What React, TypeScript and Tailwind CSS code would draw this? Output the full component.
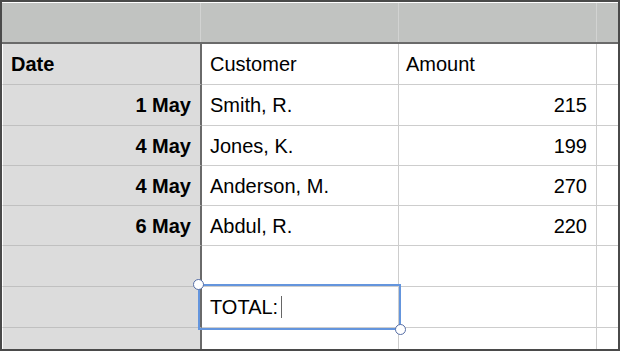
import React from "react";

type Row = { d: string; c: string; a: string; head?: boolean; h: string; cursor?: boolean };

const rows: Row[] = [
  { d: "Date", c: "Customer", a: "Amount", head: true, h: "h-[41px]" },
  { d: "1 May", c: "Smith, R.", a: "215", h: "h-[41px]" },
  { d: "4 May", c: "Jones, K.", a: "199", h: "h-[40px]" },
  { d: "4 May", c: "Anderson, M.", a: "270", h: "h-[40px]" },
  { d: "6 May", c: "Abdul, R.", a: "220", h: "h-[40px]" },
  { d: "", c: "", a: "", h: "h-[41px]" },
  { d: "", c: "TOTAL:", a: "", h: "h-[41px]", cursor: true },
];

export default function App() {
  return (
    <div className="w-[620px] h-[351px] bg-white">
      <div className="relative w-[620px] h-[351px] border-2 border-[#4a4a4a] flex flex-col font-['Liberation_Sans',Arial,sans-serif] text-[20px] text-black overflow-hidden">
        {/* header band */}
        <div className="flex h-[40px] shrink-0 border-t border-white bg-[#c1c3c1]">
          <div className="w-[199px] border-r border-[#d2d3d2]" />
          <div className="w-[198px] border-r border-[#d2d3d2]" />
          <div className="w-[198px] border-r border-[#d2d3d2]" />
          <div className="flex-1" />
        </div>
        <div className="h-[2px] shrink-0 bg-[#6a6a6a]" />
        {rows.map((r, i) => (
          <div key={i} className={`flex shrink-0 ${r.h}`}>
            <div
              className={`w-[200px] flex items-center bg-[#dcdcdc] border-l border-l-white border-r-2 border-r-[#6a6a6a] border-b border-b-[#c0c0c0] font-bold pl-[8px] pr-[9px] ${
                r.head ? "justify-start" : "justify-end"
              }`}
            >
              {r.d}
            </div>
            <div className="w-[197px] flex items-center border-r border-r-[#cdcdcd] border-b border-b-[#cdcdcd] pl-[8px]">
              {r.c}
              {r.cursor && <span className="ml-[3px] w-px h-[22px] bg-[#666]" />}
            </div>
            <div
              className={`w-[198px] flex items-center border-r border-r-[#cdcdcd] border-b border-b-[#cdcdcd] pl-[7px] pr-[9px] ${
                r.head ? "justify-start" : "justify-end"
              }`}
            >
              {r.a}
            </div>
            <div className="flex-1 border-b border-b-[#cdcdcd]" />
          </div>
        ))}
        <div className="flex flex-1">
          <div className="w-[200px] bg-[#dcdcdc] border-l border-l-white border-r-2 border-r-[#6a6a6a]" />
          <div className="w-[197px] border-r border-r-[#cdcdcd]" />
          <div className="w-[198px] border-r border-r-[#cdcdcd]" />
          <div className="flex-1" />
        </div>

        {/* selection overlay */}
        <div className="absolute left-[196px] top-[282px] w-[203px] h-[46px] border-2 border-[#6495dd] pointer-events-none" />
        <div className="absolute left-[191px] top-[277px] w-[11px] h-[11px] rounded-full bg-white border-[1.5px] border-[#566ea6]" />
        <div className="absolute left-[393px] top-[322px] w-[11px] h-[11px] rounded-full bg-white border-[1.5px] border-[#566ea6]" />
      </div>
    </div>
  );
}
